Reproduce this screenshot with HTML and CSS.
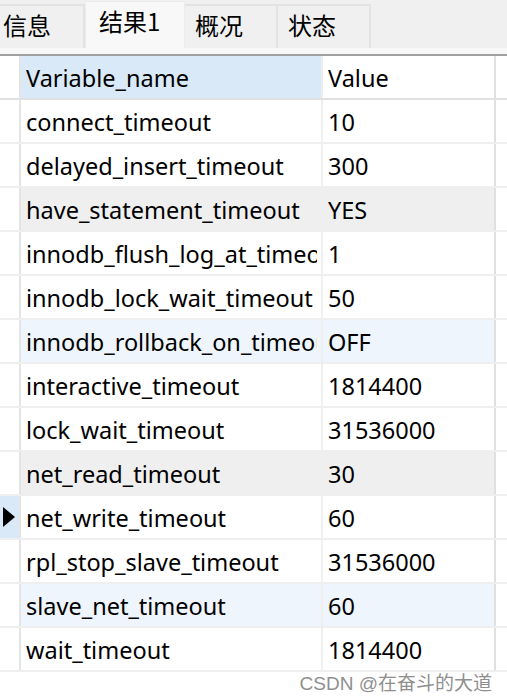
FILE: index.html
```html
<!DOCTYPE html>
<html lang="zh-CN">
<head>
<meta charset="utf-8">
<title>结果1</title>
<link rel="stylesheet" href="styles.css">
</head>
<body>
<div class="page">
  <div class="tabbar">
    <div class="tabs">
      <div class="tab tab-first">信息</div>
      <div class="tab tab-active">结果1</div>
      <div class="tab">概况</div>
      <div class="tab">状态</div>
    </div>
    <div class="strip"></div>
  </div>
  <div class="grid">
    <div class="row head">
      <div class="ind"></div>
      <div class="cell name sel"><span>Variable_name</span></div>
      <div class="cell val"><span>Value</span></div>
    </div>
    <div class="row"><div class="ind"></div><div class="cell name"><span>connect_timeout</span></div><div class="cell val"><span>10</span></div></div>
    <div class="row"><div class="ind"></div><div class="cell name"><span>delayed_insert_timeout</span></div><div class="cell val"><span>300</span></div></div>
    <div class="row gray"><div class="ind"></div><div class="cell name"><span>have_statement_timeout</span></div><div class="cell val"><span>YES</span></div></div>
    <div class="row"><div class="ind"></div><div class="cell name"><span>innodb_flush_log_at_timeout</span></div><div class="cell val"><span>1</span></div></div>
    <div class="row"><div class="ind"></div><div class="cell name"><span>innodb_lock_wait_timeout</span></div><div class="cell val"><span>50</span></div></div>
    <div class="row blue"><div class="ind"></div><div class="cell name"><span>innodb_rollback_on_timeout</span></div><div class="cell val"><span>OFF</span></div></div>
    <div class="row"><div class="ind"></div><div class="cell name"><span>interactive_timeout</span></div><div class="cell val"><span>1814400</span></div></div>
    <div class="row"><div class="ind"></div><div class="cell name"><span>lock_wait_timeout</span></div><div class="cell val"><span>31536000</span></div></div>
    <div class="row gray"><div class="ind"></div><div class="cell name"><span>net_read_timeout</span></div><div class="cell val"><span>30</span></div></div>
    <div class="row current"><div class="ind"><svg class="arrow" width="12" height="20" viewBox="0 0 12 20"><polygon points="0,0 12,10 0,20" fill="#000"/></svg></div><div class="cell name"><span>net_write_timeout</span></div><div class="cell val"><span>60</span></div></div>
    <div class="row"><div class="ind"></div><div class="cell name"><span>rpl_stop_slave_timeout</span></div><div class="cell val"><span>31536000</span></div></div>
    <div class="row blue"><div class="ind"></div><div class="cell name"><span>slave_net_timeout</span></div><div class="cell val"><span>60</span></div></div>
    <div class="row"><div class="ind"></div><div class="cell name"><span>wait_timeout</span></div><div class="cell val"><span>1814400</span></div></div>
  </div>
  <div class="watermark">CSDN @在奋斗的大道</div>
</div>
</body>
</html>
```
FILE: styles.css
```css
html, body {
  margin: 0;
  padding: 0;
  background: #ffffff;
}
.page {
  position: relative;
  width: 507px;
  height: 700px;
  overflow: hidden;
  font-family: "Noto Sans", "Noto Sans CJK SC", sans-serif;
  color: #000;
}
.tabbar {
  display: flex;
  flex-direction: column;
  background: #f0f0f0;
  border-bottom: 2px solid #a0a0a0;
}
.tabs {
  display: flex;
  align-items: flex-end;
  height: 48px;
}
.strip {
  height: 6px;
  background: #f8f8f8;
}
.tab {
  box-sizing: border-box;
  height: 44px;
  width: 93px;
  padding-left: 10px;
  border: 2px solid #e3e3e3;
  border-bottom: none;
  border-left-width: 0;
  background: #f0f0f0;
  font-family: "Noto Sans CJK SC", sans-serif;
  font-size: 24px;
  line-height: 38px;
  white-space: nowrap;
}
.tab-first {
  width: 85px;
  padding-left: 3px;
  border-left: none;
}
.tab-active {
  height: 47px;
  width: 100px;
  padding-left: 13px;
  background: #f8f8f8;
  border: 1px solid #ececec;
  border-bottom: none;
  line-height: 38px;
}
.grid {
  display: flex;
  flex-direction: column;
}
.row {
  box-sizing: border-box;
  display: flex;
  height: 44px;
  border-bottom: 2px solid #efefef;
  background: #ffffff;
}
.row.head {
  border-bottom-color: #e1e1e1;
}
.ind {
  box-sizing: border-box;
  width: 21px;
  flex: none;
  border-right: 2px solid #e4e4e4;
  display: flex;
  align-items: center;
  padding-left: 3px;
}
.cell {
  box-sizing: border-box;
  flex: none;
  display: flex;
  align-items: center;
  padding: 1px 4px 0 5px;
  font-size: 23.5px;
  white-space: nowrap;
  border-right: 2px solid #efefef;
}
.cell span {
  display: block;
  overflow: hidden;
  width: 100%;
}
.name {
  width: 302px;
}
.val {
  width: 173px;
  border-right-color: #e0e0e0;
}
.sel {
  background: #d9e9f8;
}
.row.gray .cell {
  background: #efefef;
}
.row.blue .cell {
  background: #eef5fd;
}
.row.current .ind {
  background: #d9e9f8;
}
.arrow {
  display: block;
}
.watermark {
  position: absolute;
  right: 15px;
  top: 668px;
  font-family: "Liberation Sans", "Noto Sans CJK SC", sans-serif;
  font-size: 19px;
  color: #8f8f8f;
  text-shadow: 0 0 1px #ffffff;
  white-space: nowrap;
}
```
